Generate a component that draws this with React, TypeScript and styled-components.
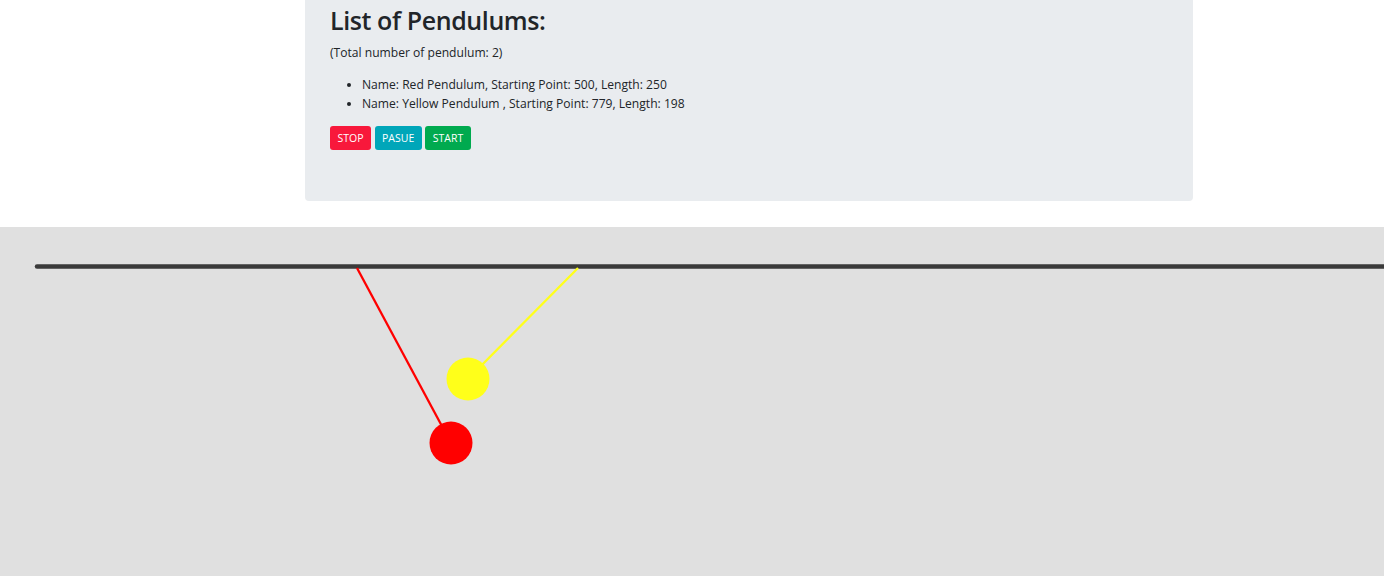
import React from "react";
import styled, { createGlobalStyle } from "styled-components";

const Global = createGlobalStyle`
  html, body { margin: 0; padding: 0; background: #fff; }
  body { font-family: "Open Sans", "Noto Sans", sans-serif; color: #212529; }
`;

const Page = styled.div`
  display: flex;
  flex-direction: column;
`;

const Panel = styled.section`
  width: 888px;
  margin-left: 305px;
  box-sizing: border-box;
  padding: 4px 25px 51px;
  background: #e9ecef;
  border-radius: 0 0 4px 4px;
`;

const Title = styled.h1`
  margin: 0 0 7px;
  font-size: 25px;
  font-weight: 600;
  line-height: 32px;
  letter-spacing: -0.4px;
  color: #212529;
`;

const Count = styled.p`
  margin: 0;
  font-size: 12.1px;
  line-height: 19.2px;
`;

const List = styled.ul`
  margin: 13px 0 12px;
  padding-left: 32px;
  font-size: 12.1px;
  line-height: 19.2px;
`;

const Controls = styled.div`
  display: flex;
  gap: 3.5px;
`;

const Btn = styled.button<{ $bg: string }>`
  height: 24px;
  padding: 0 7.5px;
  border: none;
  border-radius: 3px;
  background: ${(p) => p.$bg};
  color: #fff;
  font-family: "Open Sans", "Noto Sans", sans-serif;
  font-size: 10.5px;
  line-height: 24px;
  cursor: pointer;
`;

const Stage = styled.div`
  margin-top: 26px;
  height: 360px;
  background: #e0e0e0;
`;

const pendulums = [
  { name: "Red Pendulum", start: 500, length: 250, color: "#ff0000", px: 357, bx: 451, by: 216 },
  { name: "Yellow Pendulum ", start: 779, length: 198, color: "#ffff1a", px: 578, bx: 468, by: 152 },
];

export default function App() {
  return (
    <Page>
      <Global />
      <Panel>
        <Title>List of Pendulums:</Title>
        <Count>(Total number of pendulum: {pendulums.length})</Count>
        <List>
          {pendulums.map((p) => (
            <li key={p.name}>
              Name: {p.name}, Starting Point: {p.start}, Length: {p.length}
            </li>
          ))}
        </List>
        <Controls>
          <Btn $bg="#f8183b">STOP</Btn>
          <Btn $bg="#00a6b9">PASUE</Btn>
          <Btn $bg="#00aa4f">START</Btn>
        </Controls>
      </Panel>
      <Stage>
        <svg width="1384" height="360" viewBox="0 0 1384 360">
          <line x1="37" y1="39.5" x2="1400" y2="39.5" stroke="#3a3a3a" strokeWidth="4.5" strokeLinecap="round" />
          {pendulums.map((p) => (
            <g key={p.name}>
              <line x1={p.px} y1="41" x2={p.bx} y2={p.by} stroke={p.color} strokeWidth="2.3" />
              <circle cx={p.bx} cy={p.by} r="21.5" fill={p.color} />
            </g>
          ))}
        </svg>
      </Stage>
    </Page>
  );
}
